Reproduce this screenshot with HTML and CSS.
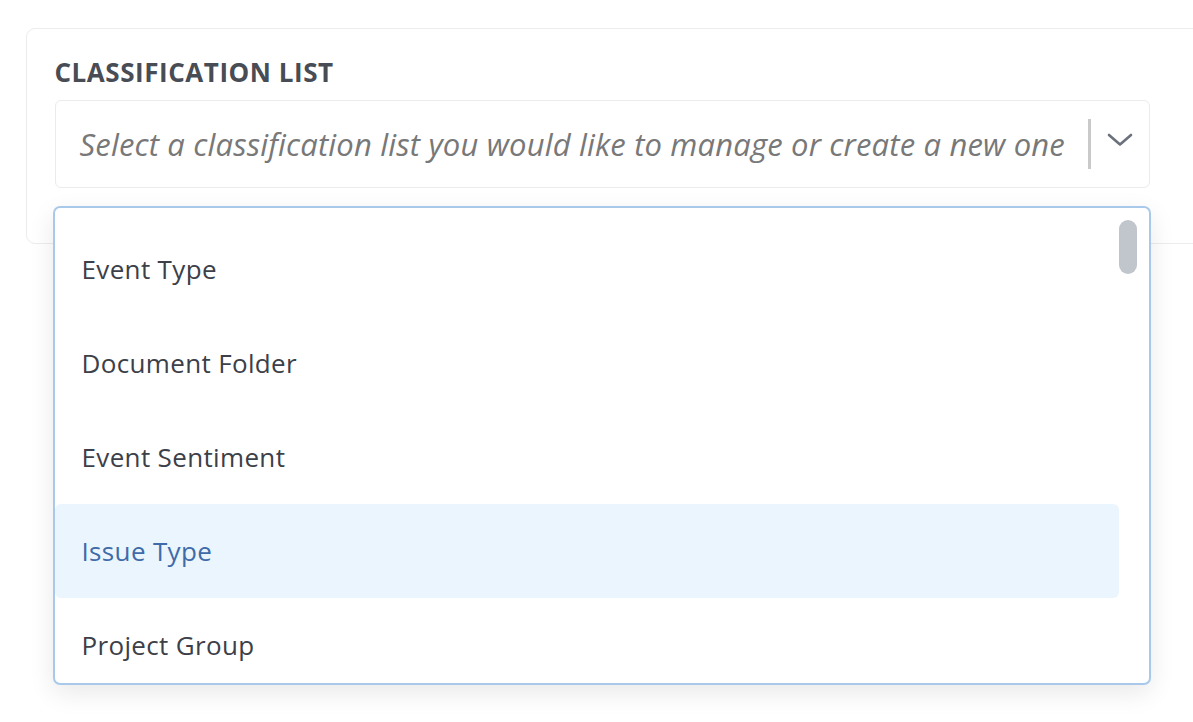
FILE: index.html
```html
<!DOCTYPE html>
<html lang="en">
<head>
<meta charset="utf-8">
<title>Classification List</title>
<link rel="stylesheet" href="styles.css">
</head>
<body>
<div class="page">
  <section class="card">
    <label class="label">CLASSIFICATION LIST</label>
    <div class="select-wrap">
      <div class="select">
        <span class="placeholder">Select a classification list you would like to manage or create a new one</span>
        <span class="sep"></span>
        <span class="chev">
          <svg width="26" height="14" viewBox="0 0 26 14"><path d="M2 2 L13 11.5 L24 2" fill="none" stroke="#6b717c" stroke-width="2.6" stroke-linecap="round" stroke-linejoin="round"/></svg>
        </span>
      </div>
      <div class="menu">
        <ul class="options">
          <li class="option">Event Type</li>
          <li class="option">Document Folder</li>
          <li class="option">Event Sentiment</li>
          <li class="option active">Issue Type</li>
          <li class="option">Project Group</li>
        </ul>
        <div class="track"><div class="thumb"></div></div>
      </div>
    </div>
  </section>
</div>
</body>
</html>
```
FILE: styles.css
```css
* { box-sizing: border-box; }
html, body { margin: 0; padding: 0; background: #ffffff; }
body {
  font-family: "Open Sans", "Noto Sans", sans-serif;
  width: 1193px;
  height: 722px;
  overflow: hidden;
}
.page {
  padding: 28px 0 0 26px;
  overflow-x: clip;
  overflow-y: visible;
  height: 722px;
}
.card {
  width: 1200px;
  height: 216px;
  border: 1.5px solid #ececec;
  border-radius: 9px;
  padding: 26px 28px 0 27.5px;
  background: #fff;
}
.label {
  display: block;
  font-size: 26px;
  line-height: 34px;
  font-weight: 700;
  color: #484c54;
  letter-spacing: 0.55px;
  margin-bottom: 11px;
}
.select-wrap {
  position: relative;
  width: 1095px;
}
.select {
  height: 88px;
  border: 1.5px solid #ebebeb;
  border-radius: 6px;
  display: flex;
  align-items: center;
  padding-left: 24px;
  background: #fff;
}
.placeholder {
  font-size: 31px;
  font-style: italic;
  color: #787878;
  white-space: nowrap;
  letter-spacing: 0.17px;
}
.sep {
  width: 2.5px;
  height: 50px;
  background: #c9c9c9;
  margin-left: auto;
}
.chev {
  width: 58px;
  display: flex;
  justify-content: center;
  align-items: center;
  margin-top: -8px;
}
.menu {
  position: absolute;
  top: 106px;
  left: -2px;
  width: 1098px;
  height: 479px;
  border: 2px solid #a9c9ea;
  border-radius: 7px;
  background: #fff;
  box-shadow: 0 8px 26px rgba(0, 0, 0, 0.09);
  display: flex;
  overflow: hidden;
}
.options {
  list-style: none;
  margin: 0;
  padding: 13.5px 0 0 0;
  flex: 1;
}
.option {
  height: 94px;
  display: flex;
  align-items: center;
  padding-left: 27px;
  font-size: 26px;
  color: #3c4048;
  letter-spacing: 0.35px;
  border-radius: 6px;
}
.option.active {
  background: #ebf5fe;
  color: #3f6ba8;
}
.track {
  width: 30px;
  padding: 12px 0 0 0;
}
.thumb {
  width: 18px;
  height: 54px;
  border-radius: 9px;
  background: #c1c5cc;
}
```
